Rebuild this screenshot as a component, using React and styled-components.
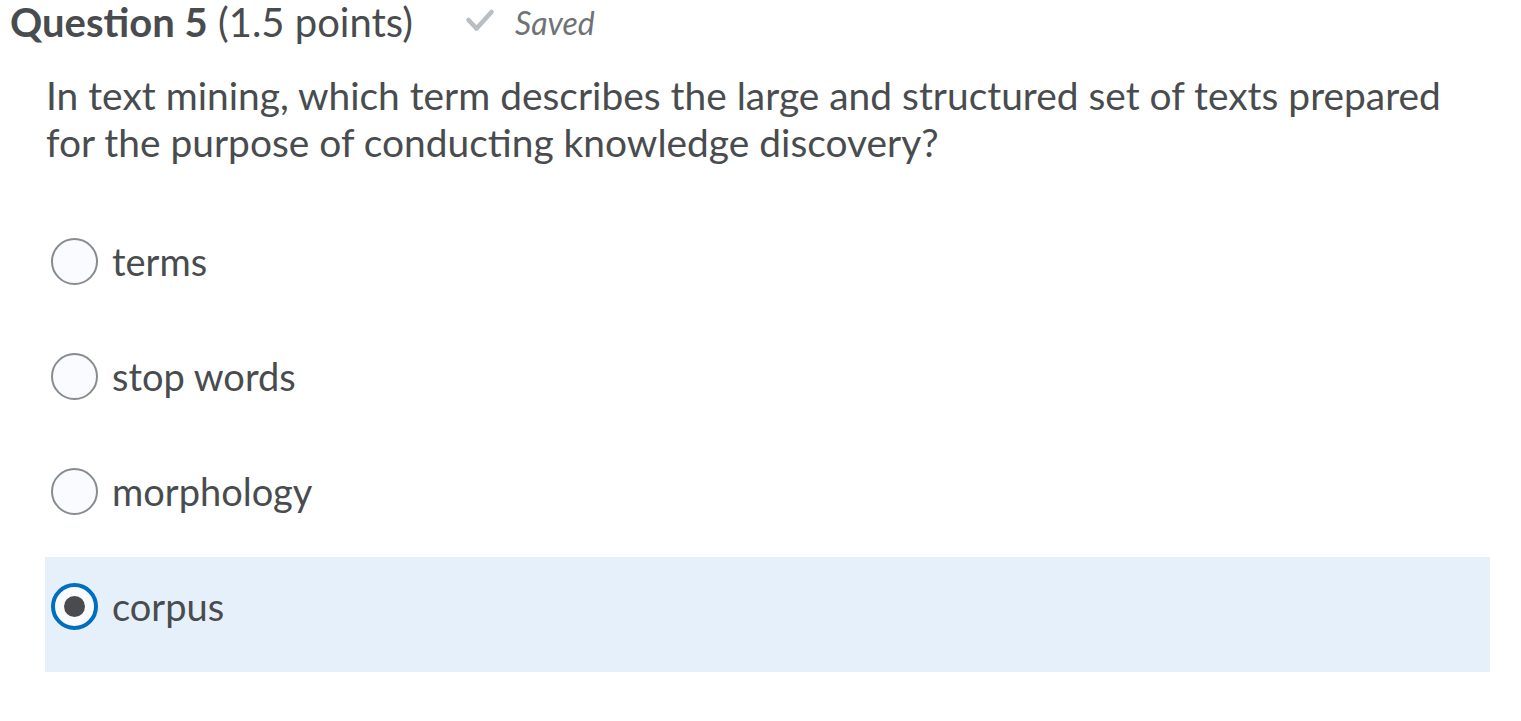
import styled, { createGlobalStyle } from 'styled-components';

const GlobalStyle = createGlobalStyle`
  html, body {
    margin: 0;
    padding: 0;
    background: #fff;
  }
  body {
    font-family: Lato, "Open Sans", sans-serif;
    color: #494c4e;
  }
`;

const options = [
  { label: 'terms', selected: false },
  { label: 'stop words', selected: false },
  { label: 'morphology', selected: false },
  { label: 'corpus', selected: true },
];

const App = () => {
  return (
    <Page>
      <GlobalStyle />
      <Header>
        <Title>
          <strong>Question 5</strong> (1.5 points)
        </Title>
        <Status>
          <svg width="30" height="24" viewBox="0 0 30 24">
            <path
              d="M3.5 12 L11.5 20.5 L26.5 4"
              fill="none"
              stroke="#b9bec2"
              strokeWidth="4.6"
              strokeLinecap="round"
              strokeLinejoin="round"
            />
          </svg>
          <span>Saved</span>
        </Status>
      </Header>

      <Body>
        <Prompt>
          In text mining, which term describes the large and structured set of texts prepared
          <br />
          for the purpose of conducting knowledge discovery?
        </Prompt>

        <OptionList>
          {options.map((o) => (
            <Option key={o.label} selected={o.selected}>
              <Radio selected={o.selected} />
              <OptionLabel>{o.label}</OptionLabel>
            </Option>
          ))}
        </OptionList>
      </Body>
    </Page>
  );
};

export default App;

const Page = styled.div`
  width: 1521px;
  height: 721px;
  overflow: hidden;
`;

const Header = styled.div`
  display: flex;
  align-items: center;
  padding: 0 0 0 10px;
  height: 44px;
`;

const Title = styled.h2`
  margin: 0;
  font-size: 40px;
  font-weight: 400;
  line-height: 40px;

  strong {
    font-weight: 700;
  }
`;

const Status = styled.div`
  display: flex;
  align-items: center;
  margin-left: 52px;
  margin-top: 2px;
  gap: 20px;
  font-style: italic;
  font-size: 32px;
  line-height: 40px;
  color: #6e7376;

  svg {
    margin-top: -6px;
  }
`;

const Body = styled.div`
  padding: 28px 31px 0 45px;
`;

const Prompt = styled.p`
  margin: 0 0 0 1px;
  font-size: 38.9px;
  line-height: 47px;
`;

const OptionList = styled.div`
  margin-top: 46px;
  display: flex;
  flex-direction: column;
`;

const Option = styled.div`
  box-sizing: border-box;
  display: flex;
  align-items: flex-start;
  height: 115px;
  padding: 26px 0 0 6px;
  background: ${(props) => (props.selected ? '#e6f0fa' : 'transparent')};
`;

const Radio = styled.span`
  box-sizing: border-box;
  width: 47px;
  height: 47px;
  border-radius: 50%;
  flex-shrink: 0;
  background: #f9fbff;
  border: ${(props) => (props.selected ? '4px solid #006fbf' : '2px solid #868c8f')};
  display: flex;
  align-items: center;
  justify-content: center;

  &::after {
    content: '';
    display: ${(props) => (props.selected ? 'block' : 'none')};
    width: 21px;
    height: 21px;
    border-radius: 50%;
    background: #494c4e;
  }
`;

const OptionLabel = styled.span`
  margin-left: 14px;
  font-size: 38px;
  line-height: 47px;
`;
